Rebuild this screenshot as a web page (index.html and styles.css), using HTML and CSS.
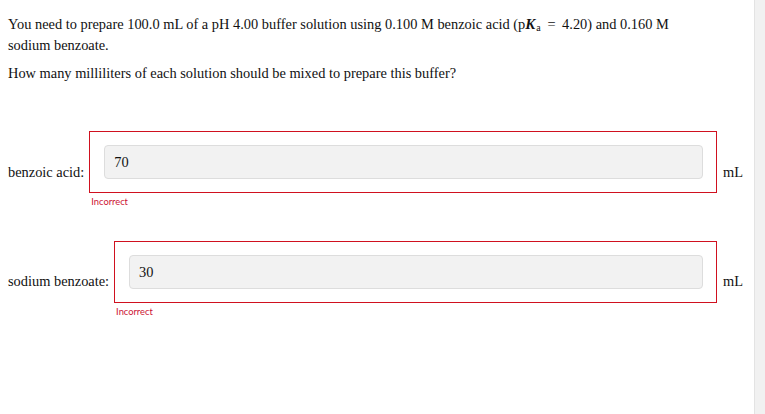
FILE: index.html
```html
<!DOCTYPE html>
<html lang="en">
<head>
<meta charset="utf-8">
<title>Buffer question</title>
<link rel="stylesheet" href="styles.css">
</head>
<body>
<div class="page">
  <main class="content">
    <p class="question">You need to prepare 100.0 mL of a pH 4.00 buffer solution using 0.100 M benzoic acid (p<i class="math">K</i><sub class="sub">a</sub>&nbsp;<span class="eq">=</span>&nbsp;4.20) and 0.160 M sodium benzoate.</p>
    <p class="question">How many milliliters of each solution should be mixed to prepare this buffer?</p>

    <div class="answers">
      <div class="answer">
        <span class="label">benzoic acid:</span>
        <div class="field">
          <div class="box"><div class="input">70</div></div>
          <div class="feedback">Incorrect</div>
        </div>
        <span class="unit">mL</span>
      </div>
      <div class="answer second">
        <span class="label">sodium benzoate:</span>
        <div class="field">
          <div class="box"><div class="input">30</div></div>
          <div class="feedback">Incorrect</div>
        </div>
        <span class="unit">mL</span>
      </div>
    </div>
  </main>
  <div class="scrollbar"></div>
</div>
</body>
</html>
```

FILE: styles.css
```css
html, body {
  margin: 0;
  padding: 0;
  background: #ffffff;
}

body {
  font-family: "Liberation Serif", "Times New Roman", serif;
  font-size: 14.4px;
  color: #111111;
}

.page {
  display: flex;
  height: 414px;
  overflow: hidden;
}

.content {
  flex: 1;
  padding: 14px 8px 0 8px;
}

.question {
  margin: 0 0 7px 0;
  line-height: 21px;
  max-width: 690px;
}

.math {
  font-style: italic;
  font-weight: bold;
  font-size: 15px;
}

.sub {
  font-size: 10px;
  vertical-align: -2px;
  line-height: 0;
  margin-left: 1px;
}

.eq {
  padding: 0 3px;
}

.answers {
  margin-top: 47px;
  display: flex;
  flex-direction: column;
  gap: 33px;
}

.answer {
  display: flex;
  align-items: flex-start;
  gap: 5px;
}

.label,
.unit {
  line-height: 16px;
  padding-top: 33px;
  white-space: nowrap;
}

.answer.second .label,
.answer.second .unit {
  padding-top: 32px;
}

.unit {
  margin-left: 1px;
  margin-right: 3px;
}

.field {
  flex: 1;
  display: flex;
  flex-direction: column;
}

.box {
  border: 1px solid #d0111f;
  padding: 13px 13px 13px 14px;
}

.input {
  height: 32px;
  border: 1px solid #dddddd;
  border-radius: 4px;
  background: #f2f2f2;
  padding-left: 9px;
  line-height: 32px;
  font-size: 14.4px;
  color: #111111;
}

.feedback {
  margin-top: 3px;
  margin-left: 2px;
  font-family: Lato, "Open Sans", sans-serif;
  font-size: 9.3px;
  line-height: 12px;
  color: #cc1133;
}

.scrollbar {
  width: 10px;
  flex-shrink: 0;
  background: #f1f1f1;
  border-left: 1px solid #e3e3e3;
}
```
